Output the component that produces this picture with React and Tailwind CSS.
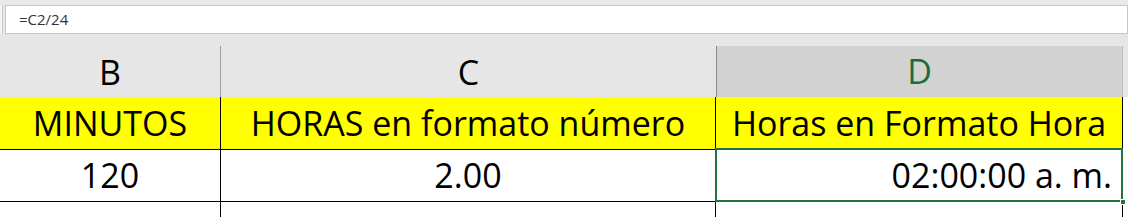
export default function App() {
  const font = { fontFamily: '"Open Sans", "Liberation Sans", sans-serif' };
  return (
    <div className="w-[1128px] h-[217px] overflow-hidden bg-white flex flex-col" style={font}>
      <div className="h-[5px] bg-[#e9e9e9]" />
      <div className="h-[29px] flex bg-[#e9e9e9]">
        <div className="w-[3px] border-r border-[#c6c6c6] bg-[#f3f3f3]" />
        <div className="w-[2px]" />
        <div className="flex-1 bg-white border border-[#c6c6c6] flex items-center pl-[13px] text-[15px] text-[#333]">
          =C2/24
        </div>
      </div>
      <div className="h-[12px] bg-[#e6e6e6]" />
      <div className="h-[51px] grid grid-cols-[221px_495px_407px_1fr] bg-[#e6e6e6] text-[34px] text-black">
        <div className="flex items-center justify-center border-r border-[#9e9e9e]">B</div>
        <div className="flex items-center justify-center">C</div>
        <div className="flex items-center justify-center bg-[#d2d2d2] border-l border-[#8a8a8a] border-r border-r-[#bdbdbd] border-b-2 border-b-[#217346] text-[#1e6b3c]">D</div>
        <div />
      </div>
      <div className="h-[53px] grid grid-cols-[221px_495px_407px_1fr] text-[34px] text-black">
        <div className="flex items-center justify-center bg-[#ffff00] border-r border-b border-black">MINUTOS</div>
        <div className="flex items-center justify-center bg-[#ffff00] border-r border-b border-black">HORAS en formato número</div>
        <div className="flex items-center justify-center bg-[#ffff00] border-r border-b border-black">Horas en Formato Hora</div>
        <div />
      </div>
      <div className="h-[52px] grid grid-cols-[221px_495px_407px_1fr] text-[34px] text-black">
        <div className="flex items-center justify-center border-r border-b border-black">120</div>
        <div className="flex items-center justify-center border-r border-b border-black">2.00</div>
        <div className="relative flex items-center justify-end pr-[10px] border-r border-b border-black">
          02:00:00 a. m.
          <div className="absolute left-[-1px] top-[-2px] right-[-1px] bottom-[-1px] border-2 border-[#217346]" />
          <div className="absolute right-[-4px] bottom-[-4px] w-[6px] h-[6px] bg-[#217346] border border-white" />
        </div>
        <div />
      </div>
      <div className="flex-1 grid grid-cols-[221px_495px_407px_1fr]">
        <div className="border-r border-black" />
        <div className="border-r border-black" />
        <div className="border-r border-black" />
        <div />
      </div>
    </div>
  );
}
